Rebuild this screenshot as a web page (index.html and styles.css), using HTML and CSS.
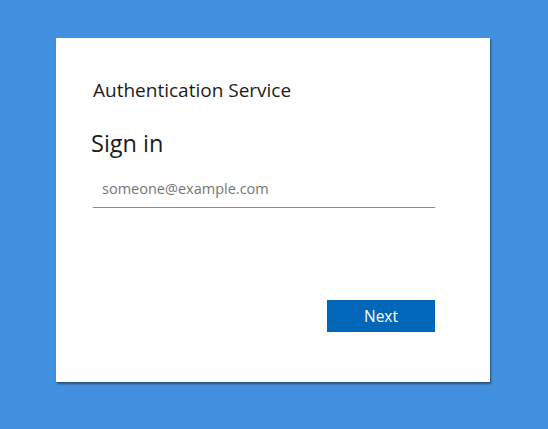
FILE: index.html
```html
<!DOCTYPE html>
<html>
<head>
<meta charset="utf-8">
<link rel="stylesheet" href="styles.css">
</head>
<body>
<div class="card">
  <div class="brand">Authentication Service</div>
  <div class="title">Sign in</div>
  <div class="field">someone@example.com</div>
  <div class="actions">
    <div class="btn">Next</div>
  </div>
</div>
</body>
</html>
```
FILE: styles.css
```css
html, body {
  margin: 0;
  padding: 0;
  background: #4490e0;
  height: 100%;
}
body {
  padding: 38px 0 0 56px;
  box-sizing: border-box;
  font-family: "Open Sans", "Noto Sans", sans-serif;
}
.card {
  width: 434px;
  height: 344px;
  background: #fff;
  box-shadow: 1px 2px 2px rgba(0,0,0,0.45);
  box-sizing: border-box;
  padding: 37px 55px 0 37px;
  display: flex;
  flex-direction: column;
}
.brand {
  font-size: 19px;
  color: #1b1b1b;
  line-height: 30px;
}
.title {
  font-size: 23.5px;
  color: #1b1b1b;
  line-height: 32px;
  margin-top: 22px;
  margin-left: -2px;
}
.field {
  margin-top: 14px;
  height: 34px;
  line-height: 32px;
  font-size: 14.5px;
  color: #757575;
  border-bottom: 1px solid #8a8a8a;
  padding-left: 9px;
  box-sizing: content-box;
}
.actions {
  display: flex;
  justify-content: flex-end;
  margin-top: 92px;
}
.btn {
  width: 108px;
  height: 32px;
  background: #0067b8;
  color: #fff;
  font-size: 15.5px;
  font-weight: 400;
  line-height: 32px;
  text-align: center;
}
```
